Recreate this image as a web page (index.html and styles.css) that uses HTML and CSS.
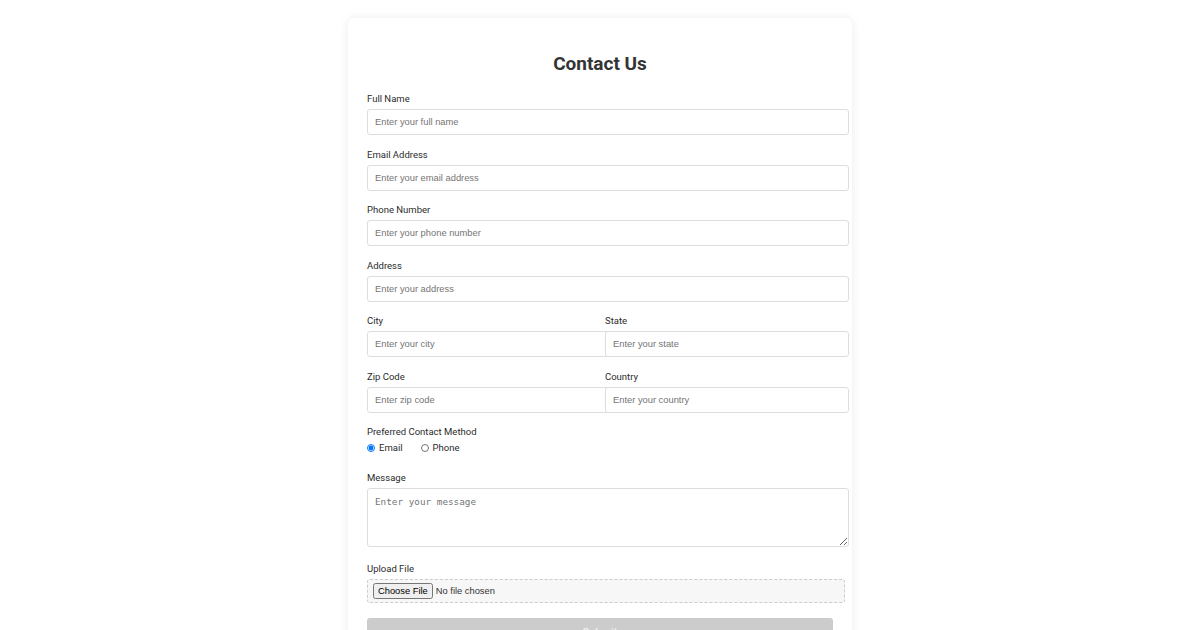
FILE: index.html
```html
<!DOCTYPE html>
<html lang="en">
<head>
<meta charset="utf-8">
<title>Contact Us</title>
<link rel="stylesheet" href="styles.css">
</head>
<body>
<div class="card">
  <h2 class="title">Contact Us</h2>
  <form class="form">
    <div class="group">
      <label class="label" for="name">Full Name</label>
      <input class="field" id="name" type="text" placeholder="Enter your full name">
    </div>
    <div class="group">
      <label class="label" for="email">Email Address</label>
      <input class="field" id="email" type="email" placeholder="Enter your email address">
    </div>
    <div class="group">
      <label class="label" for="phone">Phone Number</label>
      <input class="field" id="phone" type="tel" placeholder="Enter your phone number">
    </div>
    <div class="group">
      <label class="label" for="address">Address</label>
      <input class="field" id="address" type="text" placeholder="Enter your address">
    </div>
    <div class="row">
      <div class="group">
        <label class="label" for="city">City</label>
        <input class="field" id="city" type="text" placeholder="Enter your city">
      </div>
      <div class="group">
        <label class="label" for="state">State</label>
        <input class="field" id="state" type="text" placeholder="Enter your state">
      </div>
    </div>
    <div class="row">
      <div class="group">
        <label class="label" for="zip">Zip Code</label>
        <input class="field" id="zip" type="text" placeholder="Enter zip code">
      </div>
      <div class="group">
        <label class="label" for="country">Country</label>
        <input class="field" id="country" type="text" placeholder="Enter your country">
      </div>
    </div>
    <div class="group group-radio">
      <span class="label">Preferred Contact Method</span>
      <div class="radios">
        <label class="radio"><input type="radio" name="method" checked> Email</label>
        <label class="radio"><input type="radio" name="method"> Phone</label>
      </div>
    </div>
    <div class="group group-msg">
      <label class="label" for="msg">Message</label>
      <textarea class="field area" id="msg" placeholder="Enter your message"></textarea>
    </div>
    <div class="group">
      <label class="label" for="file">Upload File</label>
      <input class="file" id="file" type="file">
    </div>
    <button class="submit" type="submit" disabled>Submit</button>
  </form>
</div>
</body>
</html>
```

FILE: styles.css
```css
html, body {
  margin: 0;
  padding: 0;
  background: #ffffff;
}

body {
  font-family: Roboto, "Liberation Sans", Arial, sans-serif;
  color: #333333;
}

.card {
  width: 466px;
  margin: 18px auto 0;
  padding: 19px 19px 30px;
  background: #ffffff;
  border-radius: 6px;
  box-shadow: 0 0 10px rgba(0, 0, 0, 0.08);
}

.title {
  margin: 15px 0 18px;
  text-align: center;
  font-size: 19px;
  line-height: 23px;
  font-weight: 700;
  color: #333333;
}

.form {
  display: block;
}

.group {
  margin-bottom: 13.5px;
}

.group-radio {
  margin-bottom: 18.5px;
}

.label {
  display: block;
  font-size: 9.5px;
  line-height: 12px;
  font-weight: 400;
  color: #2b2b2b;
  margin-bottom: 4px;
}

.field {
  display: block;
  width: 100%;
  height: 10px;
  padding: 7px 7px;
  border: 1px solid #dddddd;
  border-radius: 3px;
  font-family: "Liberation Sans", Arial, sans-serif;
  font-size: 9.33px;
  line-height: 10px;
  color: #333333;
  background: #ffffff;
  box-sizing: content-box;
  outline: none;
}

.field::placeholder {
  color: #757575;
}

.row {
  display: grid;
  grid-template-columns: 1fr 1fr;
  column-gap: 10px;
}

.radios {
  display: flex;
  align-items: center;
  gap: 18px;
  height: 11px;
}

.radio {
  display: flex;
  align-items: center;
  gap: 4px;
  font-size: 9.5px;
  font-weight: 400;
  color: #2b2b2b;
}

.radio input {
  width: 8px;
  height: 8px;
  margin: 0;
}

.group-msg {
  margin-bottom: 16px;
}

.area {
  height: 43px;
  font-family: "DejaVu Sans Mono", "Liberation Mono", monospace;
  font-size: 9.33px;
  line-height: 11px;
  resize: vertical;
}

.file {
  display: block;
  width: 466px;
  padding: 3px 5px;
  border: 1px dashed #cccccc;
  border-radius: 3px;
  background: #f7f7f7;
  font-family: "Liberation Sans", Arial, sans-serif;
  font-size: 9.33px;
  box-sizing: content-box;
}

.file::file-selector-button {
  padding: 1px 3px;
  margin-right: 3px;
  font-family: "Liberation Sans", Arial, sans-serif;
  font-size: 9.33px;
}

.submit {
  display: block;
  width: 100%;
  height: 30px;
  margin-top: 15px;
  border: none;
  border-radius: 3px;
  background: #cccccc;
  color: #f2f2f2;
  font-family: Roboto, "Liberation Sans", Arial, sans-serif;
  font-size: 11px;
  font-weight: 500;
}
```
